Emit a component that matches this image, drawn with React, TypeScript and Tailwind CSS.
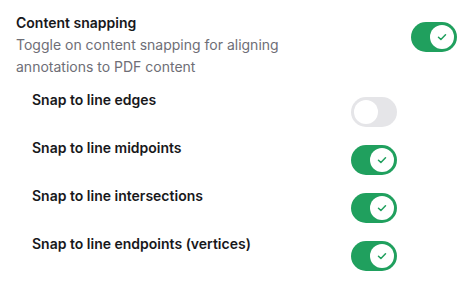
import React, { useState } from 'react';

interface ToggleProps {
  on: boolean;
  onChange: () => void;
}

const Toggle: React.FC<ToggleProps> = ({ on, onChange }) => (
  <button
    type="button"
    onClick={onChange}
    className={`relative flex items-center shrink-0 w-[46px] h-[30px] rounded-full px-[3px] ${
      on ? 'bg-[#20a05e] justify-end' : 'bg-[#e5e5e8] justify-start'
    }`}
  >
    <span className="flex items-center justify-center w-[24px] h-[24px] rounded-full bg-white">
      {on && (
        <svg width="12" height="12" viewBox="0 0 12 12" fill="none">
          <path d="M2.5 6.2l2.4 2.3L9.5 3.8" stroke="#20a05e" strokeWidth="1.5" strokeLinecap="round" strokeLinejoin="round" />
        </svg>
      )}
    </span>
  </button>
);

const options = [
  { id: 'edges', label: 'Snap to line edges', on: false },
  { id: 'midpoints', label: 'Snap to line midpoints', on: true },
  { id: 'intersections', label: 'Snap to line intersections', on: true },
  { id: 'endpoints', label: 'Snap to line endpoints (vertices)', on: true },
];

const App: React.FC = () => {
  const [enabled, setEnabled] = useState(true);
  const [state, setState] = useState<Record<string, boolean>>(
    Object.fromEntries(options.map((o) => [o.id, o.on]))
  );

  return (
    <div className="w-[474px] h-[293px] bg-white pt-[12px] pl-4 pr-[17px] font-[Inter,sans-serif] text-[#18181b] overflow-hidden">
      {/* Main setting */}
      <div className="flex items-start justify-between">
        <div>
          <p className="text-[14px] leading-[22px] font-semibold">Content snapping</p>
          <p className="text-[14px] leading-[22px] text-[#6e6e76] w-[280px]">
            Toggle on content snapping for aligning annotations to PDF content
          </p>
        </div>
        <div className="mt-[10px]">
          <Toggle on={enabled} onChange={() => setEnabled(!enabled)} />
        </div>
      </div>

      {/* Sub options */}
      <div className="pt-[11px] pl-4 pr-[60px]">
        {options.map((o) => (
          <div key={o.id} className="flex items-start justify-between h-[48px]">
            <span className="text-[14px] leading-[22px] font-semibold">{o.label}</span>
            <div className="mt-[8px]">
              <Toggle on={state[o.id]} onChange={() => setState({ ...state, [o.id]: !state[o.id] })} />
            </div>
          </div>
        ))}
      </div>
    </div>
  );
};

export default App;
